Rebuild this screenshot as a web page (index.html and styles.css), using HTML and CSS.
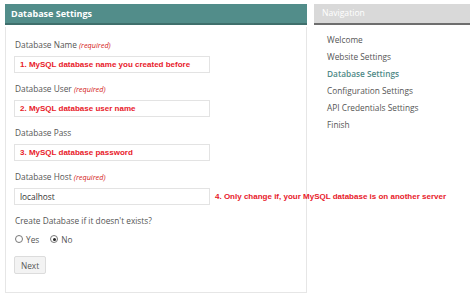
FILE: index.html
```html
<!DOCTYPE html>
<html lang="en">
<head>
  <meta charset="UTF-8">
  <meta name="viewport" content="width=device-width, initial-scale=1.0">
  <title>Database Settings</title>
  <link rel="stylesheet" href="styles.css">
</head>
<body>
  <div class="layout">
    <div class="panel main-panel">
      <div class="panel-head teal">Database Settings</div>
      <form class="panel-body" id="db-form">
        <div class="form-group">
          <label>Database Name <em>(required)</em></label>
          <div class="field note-field">1. MySQL database name you created before</div>
        </div>
        <div class="form-group">
          <label>Database User <em>(required)</em></label>
          <div class="field note-field">2. MySQL database user name</div>
        </div>
        <div class="form-group">
          <label>Database Pass</label>
          <div class="field note-field">3. MySQL database password</div>
        </div>
        <div class="form-group">
          <label>Database Host <em>(required)</em></label>
          <div class="field-row">
            <div class="field">localhost</div>
            <span class="note">4. Only change if, your MySQL database is on another server</span>
          </div>
        </div>
        <div class="form-group">
          <label>Create Database if it doesn't exists?</label>
          <div class="radios">
            <span class="radio"></span><span class="radio-text">Yes</span>
            <span class="radio checked"></span><span class="radio-text">No</span>
          </div>
        </div>
        <button type="button" class="btn">Next</button>
      </form>
    </div>

    <div class="panel side-panel">
      <div class="panel-head grey">Navigation</div>
      <ul class="nav">
        <li>Welcome</li>
        <li>Website Settings</li>
        <li class="active">Database Settings</li>
        <li>Configuration Settings</li>
        <li>API Credentials Settings</li>
        <li>Finish</li>
      </ul>
    </div>
  </div>
</body>
</html>
```

FILE: styles.css
```css
body {
  margin: 0;
  padding: 0;
  background: #fff;
  font-family: "Open Sans", Arial, sans-serif;
  font-size: 8.3px;
  color: #555;
}
.layout {
  display: flex;
  gap: 7px;
  padding: 4px 4px 0 5px;
}
.main-panel {
  width: 302px;
}
.side-panel {
  width: 157px;
}
.panel-head {
  height: 19px;
  line-height: 19px;
  padding-left: 6px;
  color: #fff;
  font-size: 9px;
  font-weight: 700;
  border-bottom: 2px solid #3f6f6c;
}
.panel-head.teal {
  background: #528d8a;
}
.panel-head.grey {
  background: #d9d9d9;
  border-bottom-color: #6e6e6e;
  font-weight: 400;
  font-size: 8.6px;
  padding-left: 8px;
}
.panel-body {
  display: block;
  margin-top: 2px;
  padding: 12px 8px 18px 8px;
  border: 1px solid #e6e6e6;
  border-top: none;
  height: 235px;
}
.form-group {
  margin-bottom: 10px;
}
label {
  display: block;
  height: 12px;
  line-height: 12px;
  margin-bottom: 5px;
  padding-left: 1px;
}
label em {
  color: #d42020;
  font-size: 7.3px;
}
.field {
  flex-shrink: 0;
  width: 184px;
  height: 15px;
  line-height: 15px;
  padding: 0 5px;
  border: 1px solid #e3e3e3;
  color: #333;
}
.note-field, .note {
  color: #e8202a;
  font-family: "Liberation Sans", Arial, sans-serif;
  font-weight: bold;
  font-size: 8px;
}
.field-row {
  display: flex;
  align-items: center;
  gap: 5px;
  white-space: nowrap;
}
.radios {
  display: flex;
  align-items: center;
  height: 14px;
  margin-top: 1px;
  padding-left: 1px;
}
.radio {
  width: 6px;
  height: 6px;
  border: 1px solid #777;
  border-radius: 50%;
  position: relative;
}
.radio.checked::after {
  content: "";
  position: absolute;
  left: 1.5px;
  top: 1.5px;
  width: 3px;
  height: 3px;
  border-radius: 50%;
  background: #222;
}
.radio-text {
  margin: 0 11px 0 3px;
}
.btn {
  display: block;
  margin-top: 10px;
  width: 32px;
  height: 18px;
  padding: 0;
  background: #f3f3f3;
  border: 1px solid #dcdcdc;
  border-radius: 2px;
  font-family: "Open Sans", Arial, sans-serif;
  font-size: 8.3px;
  color: #555;
}
.nav {
  list-style: none;
  margin: 0;
  padding: 6px 0 0 13px;
}
.nav li {
  height: 17px;
  line-height: 17px;
}
.nav li.active {
  color: #4f8a87;
  font-weight: 600;
}
```
